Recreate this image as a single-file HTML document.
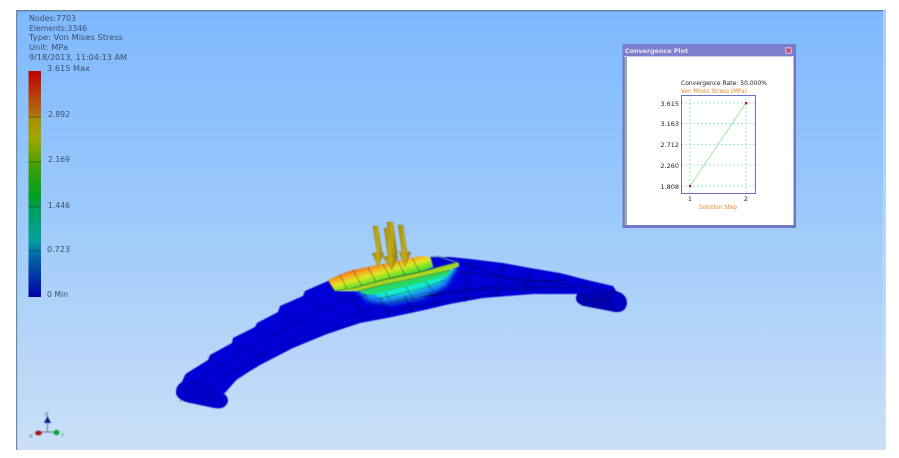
<!DOCTYPE html>
<html>
<head>
<meta charset="utf-8">
<style>
html,body{margin:0;padding:0;background:#fff;width:899px;height:458px;overflow:hidden}
svg{display:block;position:absolute;left:0;top:0}
text{font-family:"DejaVu Sans","Liberation Sans",sans-serif}
</style>
</head>
<body>
<svg width="899" height="458" viewBox="0 0 899 458" xmlns="http://www.w3.org/2000/svg">
<defs>
<linearGradient id="bg" x1="0" y1="0" x2="0" y2="1">
<stop offset="0" stop-color="#7eb9ff"/>
<stop offset=".35" stop-color="#94c5fc"/>
<stop offset=".7" stop-color="#b0d3f8"/>
<stop offset="1" stop-color="#cbe0f7"/>
</linearGradient>
<linearGradient id="leg" x1="0" y1="0" x2="0" y2="1">
<stop offset="0" stop-color="#c00000"/>
<stop offset=".19" stop-color="#b07010"/>
<stop offset=".21" stop-color="#a89000"/>
<stop offset=".3" stop-color="#a0a800"/>
<stop offset=".4" stop-color="#50a000"/>
<stop offset=".55" stop-color="#00a020"/>
<stop offset=".62" stop-color="#00a060"/>
<stop offset=".75" stop-color="#00a0a0"/>
<stop offset=".82" stop-color="#0068a4"/>
<stop offset="1" stop-color="#0000a8"/>
</linearGradient>
<linearGradient id="padTop" gradientUnits="userSpaceOnUse" x1="382" y1="259" x2="389" y2="284">
<stop offset="0" stop-color="#e84818"/>
<stop offset=".25" stop-color="#f8a020"/>
<stop offset=".5" stop-color="#e0e820"/>
<stop offset=".8" stop-color="#50e030"/>
<stop offset="1" stop-color="#10c860"/>
</linearGradient>
<linearGradient id="arrow" x1="0" y1="0" x2="1" y2="0">
<stop offset="0" stop-color="#9c8810"/>
<stop offset=".5" stop-color="#c4ae1c"/>
<stop offset="1" stop-color="#8c7808"/>
</linearGradient>
<filter id="soft" x="-5%" y="-5%" width="110%" height="110%"><feGaussianBlur stdDeviation=".45"/></filter>
<filter id="t" x="-5%" y="-20%" width="110%" height="140%"><feGaussianBlur stdDeviation=".3"/></filter>
<filter id="b1" x="-20%" y="-40%" width="140%" height="180%"><feGaussianBlur stdDeviation="2.2"/></filter>
<filter id="b2" x="-20%" y="-40%" width="140%" height="180%"><feGaussianBlur stdDeviation="1.2"/></filter>
</defs>

<rect x="16" y="10" width="870" height="440" fill="url(#bg)"/>
<rect x="16" y="10" width="867" height="1.4" fill="#5f8099"/>
<rect x="16" y="10" width="1.2" height="440" fill="#6d8aa3"/>
<rect x="883" y="11" width="3" height="439" fill="#cfe0f2" opacity=".55"/>

<!-- info text -->
<g fill="#3a4f6c" font-size="8" filter="url(#t)">
<text x="29" y="21" textLength="47" lengthAdjust="spacingAndGlyphs">Nodes:7703</text>
<text x="29" y="31" textLength="58" lengthAdjust="spacingAndGlyphs">Elements:3346</text>
<text x="29" y="40" textLength="94" lengthAdjust="spacingAndGlyphs">Type: Von Mises Stress</text>
<text x="29" y="50" textLength="39" lengthAdjust="spacingAndGlyphs">Unit: MPa</text>
<text x="29" y="60" textLength="98" lengthAdjust="spacingAndGlyphs">9/18/2013, 11:04:13 AM</text>
<text x="47" y="71" textLength="43" lengthAdjust="spacingAndGlyphs">3.615 Max</text>
<text x="48" y="117" textLength="22" lengthAdjust="spacingAndGlyphs">2.892</text>
<text x="48" y="162" textLength="22" lengthAdjust="spacingAndGlyphs">2.169</text>
<text x="48" y="208" textLength="22" lengthAdjust="spacingAndGlyphs">1.446</text>
<text x="47" y="252" textLength="23" lengthAdjust="spacingAndGlyphs">0.723</text>
<text x="47" y="297" textLength="21" lengthAdjust="spacingAndGlyphs">0 Min</text>
</g>

<!-- legend -->
<rect x="28.5" y="71" width="12.5" height="226" fill="url(#leg)"/>
<g stroke="#203030" stroke-width=".8" opacity=".6">
<line x1="28.5" x2="41" y1="117" y2="117"/>
<line x1="28.5" x2="41" y1="162" y2="162"/>
<line x1="28.5" x2="41" y1="207" y2="207"/>
<line x1="28.5" x2="41" y1="251" y2="251"/>
</g>

<!-- spring -->
<g filter="url(#soft)">
<path d="M181 384 L185 375 L187 373 L208 360 L210 355 L232 343 L233 338 L255 327 L257 323 L278 312 L280 306 L303 296 L305 291 L328 281 L360 270 L400 260 L430 257 L450 257 L470 259 L503 263 L530 268 L560 273 L587 280 L613 286 L618 294 L576 294 L533 294 L483 298 L450 304 L420 311 L387 318 L360 323 L327 334 L293 348 L260 365 L237 379 L225 393 L190 396 Z" fill="#0404d6"/>
<!-- left eye -->
<path d="M185 381 L197 380 L220 391 Q228 395 228 401 Q226 410 214 408 L186 402 Q175 398 176 391 Q177 383 185 381 Z" fill="#0404cc"/>
<!-- right eye -->
<path d="M583 292 L616 291 Q627 294 627 303 Q626 313 615 312 L584 306 Q575 303 576 297 Q577 292 583 292 Z" fill="#0303b8"/>
<ellipse cx="616" cy="302" rx="10" ry="10" fill="#0505c4"/>

<!-- stress zone -->
<path d="M356 290 L458 266 L446 286 L422 298 L390 304 L368 301 Z" fill="#1490f4" filter="url(#b1)"/>
<path d="M366 291 L456 268 L440 283 L408 294 L382 298 Z" fill="#18e8d0" filter="url(#b2)"/>

<!-- mesh: lighter on the long left arm, denser on the right -->
<g fill="none" stroke="#020270" stroke-width=".6" opacity=".6">
<path d="M190 384 L215 370 L250 348 L290 326 L330 306 L385 289"/>
<path d="M205 392 L225 376 L262 354 L300 335 L345 316 L395 302"/>
<path d="M228 386 L262 362 L300 342 L345 325 L395 311"/>
<path d="M208 360 L240 372 M232 343 L262 356 L250 366 M255 327 L290 340 M278 312 L310 326 M303 296 L332 312 M328 285 L350 300"/>
<path d="M185 385 L180 402 M196 386 L190 404 M206 390 L202 406 M187 390 L216 398"/>
</g>
<g fill="none" stroke="#020258" stroke-width=".8" opacity=".9">
<path d="M458 272 L500 277 L560 283 L616 292"/>
<path d="M395 302 L450 291 L510 285 L575 288"/>
<path d="M420 297 L480 290 L540 288"/>
<path d="M395 311 L450 300 L500 294"/>
<path d="M470 259 L465 302 M503 263 L495 296 M530 268 L525 294 M560 273 L552 293 M587 280 L580 293 M462 262 L488 272 L520 282 L570 280"/>
<path d="M584 294 L582 306 M595 292 L594 308 M606 292 L605 310 M583 299 L612 300"/>
<path d="M616 294 A7 8 0 1 0 617 310"/>
<path d="M353 300 L362 318 M380 298 L388 316 M405 296 L412 312 M430 292 L438 306"/>
</g>

<!-- load pad -->
<path d="M328 280 Q340 274 353 270 L387 263 L420 256 L430 257 L433 267 L420 272 L387 279 L353 288 L335 291 Z" fill="url(#padTop)"/>
<path d="M335 291 L353 288 L387 279 L420 272 L458 262 L459 266 L450 270 L420 277 L387 284 L358 291 Z" fill="#a4d824"/>
<path d="M358 291 L387 284 L420 277 L450 270 L448 275 L420 283 L387 291 L368 295 Z" fill="#28d868"/>
<g fill="none" stroke="#0c3030" stroke-width=".6" opacity=".85">
<path d="M353 288 L387 279 L420 272 L458 262" stroke-width=".9"/>
<path d="M358 291 L387 284 L420 277 L450 270"/>
<path d="M328 280 L335 291 L353 288"/>
<path d="M340 275 L347 289 M353 270 L362 286 M368 267 L376 282 M383 264 L391 279 M398 261 L405 275 M412 258 L420 272"/>
<path d="M365 294 L372 306 M385 292 L392 304 M405 286 L414 300 M425 281 L434 292 M372 300 L420 289 L445 280 M380 304 L430 292"/>
</g>
<path d="M430 257 L438 256 L458 263" fill="none" stroke="#5a8a70" stroke-width=".7"/>

<!-- arrows -->
<g stroke="#6f5e08" stroke-width=".25">
<path d="M387 222 L393 222 L397 252 L397 256 L392 262 L392 253 Z" fill="url(#arrow)"/>
<path d="M373 226 L378 226 L382 253 L384 253 L378 267 L372 253 L377 253 Z" fill="url(#arrow)"/>
<path d="M398 225 L403 225 L407 252 L411 252 L405 267 L399 252 L402 252 Z" fill="url(#arrow)"/>
<path d="M384 228 L389 228 L393 256 L398 257 L392 270 L383 257 L388 256 Z" fill="url(#arrow)"/>
</g>
</g>

<!-- triad -->
<g filter="url(#soft)">
<line x1="47.5" y1="420" x2="47.5" y2="431.5" stroke="#6a7f96" stroke-width="1"/>
<line x1="40" y1="432" x2="56" y2="432" stroke="#6a7f96" stroke-width="1"/>
<path d="M47.5 416 L51 423 L44 423 Z" fill="#0a1a90"/>
<ellipse cx="38.5" cy="433" rx="3.4" ry="2.4" fill="#a81818"/>
<ellipse cx="56.5" cy="432.5" rx="3" ry="2.6" fill="#10a030"/>
<text x="45" y="416" font-size="6.5" fill="#3a4a80">z</text>
<text x="29" y="438" font-size="6.5" fill="#707080">x</text>
<text x="61" y="436" font-size="5.5" fill="#50a070">y</text>
</g>

<!-- convergence window -->
<rect x="622.5" y="44" width="173.5" height="184" fill="#6f78c4"/>
<rect x="623" y="44" width="172" height="12.5" fill="#7c80cc"/>
<rect x="624" y="56" width="170" height="1" fill="#c8cce8"/>
<rect x="624.5" y="57" width="3" height="168" fill="#a0a4b4"/>
<rect x="627" y="57" width="166.5" height="168" fill="#ffffff"/>
<text x="625" y="53" font-size="6" font-weight="bold" fill="#e4e4f8" textLength="63" lengthAdjust="spacingAndGlyphs" filter="url(#t)">Convergence Plot</text>
<rect x="785" y="47" width="7" height="7" rx="1" fill="#c8a8d8"/>
<path d="M786.5 48.5 L790.5 52.5 M790.5 48.5 L786.5 52.5" stroke="#c02040" stroke-width="1.2"/>

<g filter="url(#t)">
<text x="681" y="85" font-size="5.8" fill="#222" textLength="86" lengthAdjust="spacingAndGlyphs">Convergence Rate: 50.000%</text>
<text x="681" y="93" font-size="5.8" fill="#e08a28" textLength="66" lengthAdjust="spacingAndGlyphs">Von Mises Stress (MPa)</text>
<g font-size="6.5" fill="#222" text-anchor="end">
<text x="679" y="106">3.615</text>
<text x="679" y="126">3.163</text>
<text x="679" y="147">2.712</text>
<text x="679" y="168">2.260</text>
<text x="679" y="189">1.808</text>
</g>
<text x="690" y="201" font-size="6.5" fill="#222" text-anchor="middle">1</text>
<text x="746" y="201" font-size="6.5" fill="#222" text-anchor="middle">2</text>
<text x="699" y="209" font-size="5.8" fill="#e08a28" textLength="38" lengthAdjust="spacingAndGlyphs">Solution Step</text>
</g>
<g stroke="#80dcc8" stroke-width=".7" stroke-dasharray="2 2" fill="none">
<line x1="681" x2="756" y1="103" y2="103"/>
<line x1="681" x2="756" y1="123.5" y2="123.5"/>
<line x1="681" x2="756" y1="144.5" y2="144.5"/>
<line x1="681" x2="756" y1="165" y2="165"/>
<line x1="681" x2="756" y1="186" y2="186"/>
<line x1="690" x2="690" y1="95" y2="193"/>
<line x1="746" x2="746" y1="95" y2="193"/>
</g>
<rect x="681.5" y="95.5" width="74" height="98" fill="none" stroke="#7070c8" stroke-width="1"/>
<line x1="690" y1="186" x2="746" y2="103" stroke="#90e890" stroke-width=".9"/>
<rect x="689" y="185" width="2.2" height="2.2" fill="#b01040"/>
<rect x="745" y="102" width="2.4" height="2.4" fill="#d01030"/>
</svg>
</body>
</html>
